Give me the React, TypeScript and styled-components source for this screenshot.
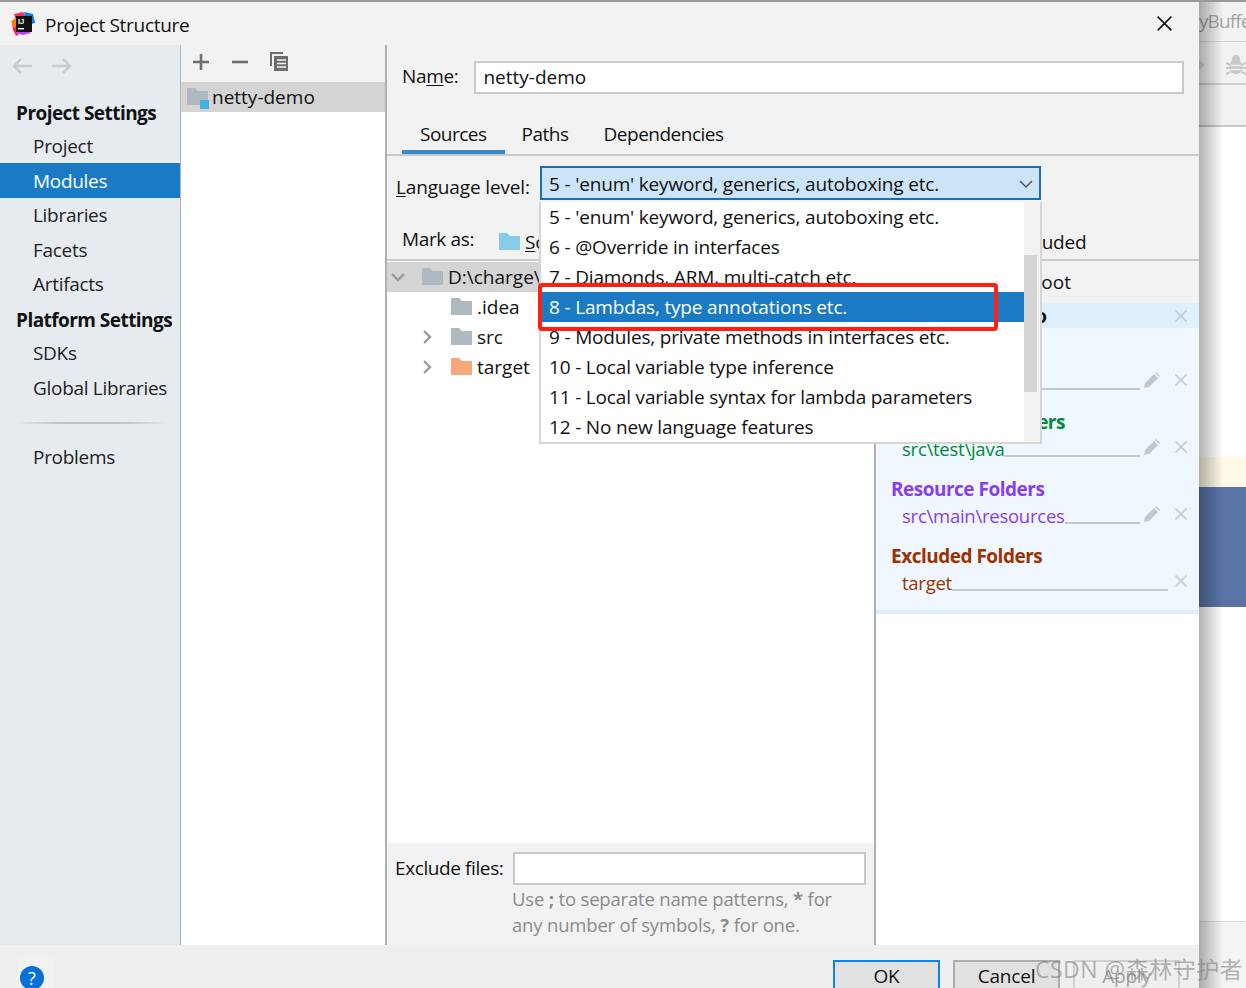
import React from "react";
import styled, { createGlobalStyle } from "styled-components";

const Global = createGlobalStyle`
  * { box-sizing: border-box; }
  html, body { margin: 0; padding: 0; background: #fff; }
  body { font-family: "Open Sans", "Noto Sans CJK SC", sans-serif; font-size: 19px; color: #111; }
  u { text-underline-offset: 2px; }
`;

const Screen = styled.div`
  position: relative; width: 1246px; height: 988px; overflow: hidden; display: flex;
  border-top: 2px solid #9a9a9a;
`;
const Dialog = styled.div`
  width: 1199px; height: 986px; flex: none; display: flex; flex-direction: column; background: #f2f2f2;
`;
const TitleBar = styled.div`
  height: 43px; flex: none; display: flex; align-items: center; padding: 0 27px 0 11px; gap: 9px;
`;
const Title = styled.span`flex: 1; font-size: 19px; letter-spacing: -0.3px; position: relative; top: 1px;`;
const Body = styled.div`flex: 1; display: flex; min-height: 0;`;
const Sidebar = styled.nav`
  width: 181px; flex: none; background: #e6ebf0; border-right: 1px solid #b4b4b4; display: flex; flex-direction: column;
`;
const NavArrows = styled.div`height: 41px; display: flex; align-items: center; gap: 18px; padding: 0 0 0 12px; margin-bottom: 8px;`;
const NavHeader = styled.div`height: 34.5px; display: flex; align-items: center; padding: 3px 0 0 16px; font-weight: 700; font-size: 19px; letter-spacing: -0.55px;`;
const NavItem = styled.div<{ $active?: boolean }>`
  height: 34.5px; display: flex; align-items: center; padding: 1px 0 0 33px; font-size: 19px; letter-spacing: -0.3px;
  background: ${p => (p.$active ? "#1a7bc4" : "transparent")};
  color: ${p => (p.$active ? "#fff" : "#222")};
`;
const NavRule = styled.div`height: 2px; margin: 17px 8px 16px 12px; background: linear-gradient(to right, #e6ebf0, #bfc3c7 30%, #bfc3c7 70%, #e6ebf0);`;

const Modules = styled.section`width: 206px; flex: none; background: #fff; border-right: 2px solid #b0b0b0; display: flex; flex-direction: column;`;
const ModuleBar = styled.div`height: 37px; background: #f2f2f2; display: flex; align-items: center; gap: 21px; padding: 0 0 3px 11px;`;
const ModuleRow = styled.div`height: 30px; background: #d4d4d4; display: flex; align-items: center; padding-left: 5px; gap: 1px; font-size: 19px;`;

const Main = styled.section`flex: 1; min-width: 0; display: flex; flex-direction: column;`;
const NameRow = styled.div`height: 64px; flex: none; display: flex; align-items: flex-start; padding: 16px 15px 0 15px; gap: 16px;`;
const NameLabel = styled.label`line-height: 30px; letter-spacing: -0.35px;`;
const TextInput = styled.div`
  flex: 1; height: 33px; background: #fff; border: 2px solid #c9c9c9; display: flex; align-items: center; padding: 0 0 2px 7px; color: #111;
`;
const Tabs = styled.div`height: 47px; flex: none; display: flex; border-bottom: 2px solid #c9c9c9; padding-left: 15px;`;
const Tab = styled.div<{ $active?: boolean }>`
  height: 45px; padding: 9px 18px 0; display: flex; align-items: center; margin-right: -1px; letter-spacing: -0.5px;
  border-bottom: 4px solid ${p => (p.$active ? "#3d88c8" : "transparent")};
`;
const LangRow = styled.div`height: 70px; flex: none; display: flex; align-items: flex-start; padding: 10px 0 0 9px;`;
const LangLabel = styled.label`width: 144px; line-height: 34px; position: relative; top: 4px; letter-spacing: -0.15px;`;
const Combo = styled.div`
  width: 501px; height: 34px; background: #cce4f8; border: 2px solid #1a6fb0; display: flex; align-items: center; justify-content: space-between; padding: 1px 6px 0 7px; letter-spacing: -0.17px;
`;
const MarkRow = styled.div`height: 35px; flex: none; display: flex; align-items: center; border-bottom: 2px solid #c9c9c9; padding: 0 0 2px 15px; white-space: nowrap;`;
const MarkLabel = styled.span`width: 97px; position: relative; top: -3px; letter-spacing: -0.35px;`;
const MarkOption = styled.span<{ $gap?: number }>`display: flex; align-items: center; gap: 5px; letter-spacing: -0.2px; margin-right: ${p => p.$gap ?? 16}px;`;
const Split = styled.div`flex: 1; display: flex; min-height: 0;`;
const LeftPane = styled.div`width: 489px; flex: none; background: #fff; display: flex; flex-direction: column; border-right: 2px solid #b0b0b0;`;
const Tree = styled.div`flex: 1; padding-top: 1px;`;
const TreeRow = styled.div<{ $selected?: boolean; $level: number }>`
  height: 30px; display: flex; align-items: center; white-space: nowrap; overflow: hidden; gap: 5px;
  padding-left: ${p => (p.$level === 0 ? 2 : 31)}px;
  background: ${p => (p.$selected ? "#d4d4d4" : "transparent")};
`;
const Twist = styled.span`width: 18px; height: 18px; flex: none; margin-right: 10px; display: flex; align-items: center; justify-content: center;`;
const Exclude = styled.div`height: 102px; flex: none; background: #f2f2f2; padding: 9px 8px 0 8px;`;
const ExcludeTop = styled.div`display: flex; align-items: center; justify-content: space-between; white-space: nowrap;`;
const ExcludeLabel = styled.label`letter-spacing: -0.4px; margin-bottom: 2px;`;
const ExcludeInput = styled.div`width: 353px; height: 33px; background: #fff; border: 2px solid #c9c9c9; flex: none;`;
const Hint = styled.p`margin: 1px 0 0 117px; line-height: 26px; color: #8b8b8b; font-size: 18.5px; letter-spacing: -0.18px; white-space: nowrap;`;

const Roots = styled.aside`flex: 1; min-width: 0; background: #fff; display: flex; flex-direction: column;`;
const AddRoot = styled.div`height: 42px; flex: none; background: #f2f2f2; display: flex; align-items: center; justify-content: flex-end; padding-right: 128px;`;
const RootCard = styled.div`background: #f0f7fe; border-bottom: 4px solid #dff0fd; height: 311px; flex: none;`;
const RootHead = styled.div`height: 25px; background: #dfeffc; display: flex; align-items: center; justify-content: flex-end; font-weight: 700; padding-right: 12px; margin-bottom: 14px; white-space: nowrap; overflow: hidden;`;
const RootPath = styled.span`margin-right: 128px; flex: none;`;
const FolderGroup = styled.div`padding-left: 15px; margin-bottom: 13px;`;
const GroupTitle = styled.div<{ $color: string }>`height: 27px; line-height: 27px; font-weight: 700; font-size: 19px; letter-spacing: -0.5px; color: ${p => p.$color};`;
const PathRow = styled.div<{ $color: string }>`height: 27px; display: flex; align-items: center; padding: 0 12px 3px 11px; color: ${p => p.$color}; font-size: 18.5px; letter-spacing: -0.25px;`;
const Leader = styled.span`flex: 1; align-self: flex-end; height: 2px; background: #c6c9cc; margin-bottom: 3px;`;
const RowIcons = styled.span<{ $edit: boolean }>`display: flex; align-items: center; gap: 15px; margin: 0 0 3px ${p => (p.$edit ? 4 : 7)}px;`;

const Footer = styled.footer`
  height: 43px; flex: none; background: #efefef; display: flex; justify-content: flex-end; align-items: flex-start; padding: 15px 19px 0 20px; gap: 13px;
`;
const HelpBox = styled.div`margin: -3px auto 0 -2px; height: 31px; padding: 9px 10px 0 2px; background: #f2f2f2;`;
const Help = styled.span`
  width: 24px; height: 24px; border-radius: 50%; background: #0b6fd8; color: #fff; font-size: 18px; display: flex; align-items: center; justify-content: center;
`;
const Btn = styled.button<{ $primary?: boolean; $disabled?: boolean }>`
  width: 107px; height: 40px; padding: 0 0 8px; font: inherit; font-size: 19px; letter-spacing: -0.2px; color: ${p => (p.$disabled ? "#a0a0a0" : "#111")};
  border: 2px solid ${p => (p.$primary ? "#0a84e6" : p.$disabled ? "#d0d0d0" : "#adadad")};
  background: ${p => (p.$disabled ? "#efefef" : "#e1e1e1")};
`;

const Backdrop = styled.div`
  flex: 1; display: flex; flex-direction: column; position: relative; background: #fff; overflow: hidden;
`;
const BackTitle = styled.div`height: 40px; border-bottom: 1px solid #d6d6d6; background: #f2f2f2; color: #a5a5a5; white-space: nowrap; padding: 6px 0 0 0; font-size: 19px; letter-spacing: -0.9px;`;
const BackTools = styled.div`height: 43px; background: #f2f2f2; border-bottom: 2px solid #d0d0d0; display: flex; align-items: center; gap: 21px; padding: 5px 0 0 0;`;
const BackTabs = styled.div`height: 42px; background: #f2f2f2; border-bottom: 2px solid #c8c8c8;`;
const BackSpacer = styled.div<{ $h: number }>`height: ${p => p.$h}px; flex: none;`;
const BackCream = styled.div`height: 30px; background: #fff9e6; flex: none;`;
const BackBlue = styled.div`height: 120px; background: #5a74a8; flex: none;`;
const BackBottom = styled.div`flex: 1; background: #f4f4f4; border-top: 1px solid #dcdcdc;`;
const Shadow = styled.div`position: absolute; left: 0; top: 0; bottom: 0; width: 24px; background: linear-gradient(to right, rgba(0,0,0,.3), rgba(0,0,0,0));`;

const Popup = styled.div`
  position: absolute; left: 539px; top: 200px; width: 503px; height: 242px; background: #fff; border: 2px solid #d6d6d6; border-top: 0; display: flex; letter-spacing: -0.17px;
`;
const PopupList = styled.div`flex: 1; min-width: 0;`;
const PopupItem = styled.div<{ $active?: boolean }>`
  height: 30px; display: flex; align-items: center; padding: 0 0 1px 8px; white-space: nowrap;
  background: ${p => (p.$active ? "#1a7bc4" : "#fff")}; color: ${p => (p.$active ? "#fff" : "#111")};
`;
const ScrollTrack = styled.div`width: 16px; flex: none; background: #f2f2f2; padding: 53px 3px 0 0;`;
const ScrollThumb = styled.div`height: 137px; background: #d6d6d6;`;
const RedBox = styled.div`position: absolute; left: 538px; top: 281px; width: 460px; height: 48px; border: 4px solid #fe2012; border-radius: 4px;`;
const Watermark = styled.div`position: absolute; left: 1035px; top: 949px; font-size: 23px; color: rgba(120,120,120,.55); white-space: nowrap; letter-spacing: .5px;`;

const Folder = ({ color = "#aeb9c0", size = 21 }: { color?: string; size?: number }) => (
  <svg width={size} height={size * 0.82} viewBox="0 0 21 17" style={{ flex: "none" }}>
    <path d="M0 0h8l3 3h10v14H0z" fill={color} />
  </svg>
);
const ModuleFolder = () => (
  <svg width="25" height="24" viewBox="0 0 25 24" style={{ flex: "none" }}>
    <path d="M1 3h8l3 3h10v14H1z" fill="#aeb9c0" />
    <rect x="14" y="15" width="9" height="9" fill="#3fb3e0" />
  </svg>
);
const Chevron = ({ dir, color = "#9a9a9a" }: { dir: "down" | "right"; color?: string }) => (
  <svg width="16" height="16" viewBox="0 0 16 16">
    <path d={dir === "down" ? "M2 5l6 6 6-6" : "M5 2l6 6-6 6"} fill="none" stroke={color} strokeWidth="2.4" />
  </svg>
);
const Cross = ({ size = 12, color = "#c5ccd2", w = 1.6 }: { size?: number; color?: string; w?: number }) => (
  <svg width={size} height={size} viewBox="0 0 12 12" style={{ flex: "none" }}>
    <path d="M.5.5l11 11M11.5.5l-11 11" stroke={color} strokeWidth={w} fill="none" />
  </svg>
);
const Pencil = () => (
  <svg width="16" height="16" viewBox="0 0 16 16" style={{ flex: "none" }}>
    <path d="M0 16l1-5L10 2l4 4-9 9zM11 1l1-1 4 4-1 1z" fill="#c3c8cc" />
  </svg>
);
const Arrow = ({ dir }: { dir: "l" | "r" }) => (
  <svg width="21" height="16" viewBox="0 0 21 16">
    <path d={dir === "l" ? "M20 8H2M9 1L2 8l7 7" : "M1 8h18M12 1l7 7-7 7"} fill="none" stroke="#c8cbce" strokeWidth="2.4" />
  </svg>
);
const Logo = () => (
  <svg width="25" height="26" viewBox="0 0 25 26" style={{ flex: "none" }}>
    <path d="M3 3l9-2 3 5-9 8z" fill="#fe315d" />
    <path d="M13 1l9 2 2 9-8 2z" fill="#087cfa" />
    <path d="M1 11l8-2 3 12-7 4-3-6z" fill="#fe2857" />
    <path d="M0 10l5-3 3 6-5 4z" fill="#ff8100" />
    <path d="M4 22l8 2 8-2-8-6z" fill="#b74af7" />
    <rect x="5" y="5" width="16" height="16" fill="#111" />
    <rect x="7" y="17" width="6" height="1.4" fill="#fff" />
    <text x="7" y="13" fontSize="7.5" fontWeight="700" fill="#fff" fontFamily="Liberation Sans, sans-serif">IJ</text>
  </svg>
);
const Minus = () => (
  <svg width="18" height="18" viewBox="0 0 18 18"><path d="M1 9h16" stroke="#6e6e6e" strokeWidth="2.6" /></svg>
);
const Plus = () => (
  <svg width="18" height="18" viewBox="0 0 18 18"><path d="M1 9h16M9 1v16" stroke="#6e6e6e" strokeWidth="2.6" /></svg>
);
const Copy = () => (
  <svg width="19" height="20" viewBox="0 0 19 20">
    <path d="M1 14V1h12" fill="none" stroke="#6e6e6e" strokeWidth="2" />
    <rect x="4" y="4" width="14" height="15" fill="#6e6e6e" />
    <path d="M7 8h9M7 11.5h9M7 15h9" stroke="#f2f2f2" strokeWidth="1.4" />
  </svg>
);
const RunMark = () => (
  <svg width="6" height="12" viewBox="0 0 6 12" style={{ flex: "none" }}><path d="M0 1l6 5-6 5z" fill="#d6d6d6" /></svg>
);
const Bug = () => (
  <svg width="20" height="22" viewBox="0 0 20 22" style={{ flex: "none" }}>
    <circle cx="10" cy="5" r="4" fill="#c9c9c9" />
    <rect x="4" y="6" width="12" height="14" rx="5" fill="#c9c9c9" />
    <path d="M0 9l4 2M20 9l-4 2M0 14h4M20 14h-4M0 20l4-2M20 20l-4-2" stroke="#c9c9c9" strokeWidth="2" />
    <path d="M5 11.5h10M5 15.5h10" stroke="#f2f2f2" strokeWidth="1.6" />
  </svg>
);

const levels = [
  "5 - 'enum' keyword, generics, autoboxing etc.",
  "6 - @Override in interfaces",
  "7 - Diamonds, ARM, multi-catch etc.",
  "8 - Lambdas, type annotations etc.",
  "9 - Modules, private methods in interfaces etc.",
  "10 - Local variable type inference",
  "11 - Local variable syntax for lambda parameters",
  "12 - No new language features",
];

const groups = [
  { title: "Source Folders", color: "#0b3fbf", path: "src\\main\\java", edit: true },
  { title: "Test Source Folders", color: "#008a3c", path: "src\\test\\java", edit: true },
  { title: "Resource Folders", color: "#8a3df0", path: "src\\main\\resources", edit: true },
  { title: "Excluded Folders", color: "#9a3300", path: "target", edit: false },
];

export default function App() {
  return (
    <Screen>
      <Global />
      <Dialog>
        <TitleBar>
          <Logo />
          <Title>Project Structure</Title>
          <Cross size={15} color="#111" w={1.2} />
        </TitleBar>
        <Body>
          <Sidebar>
            <NavArrows><Arrow dir="l" /><Arrow dir="r" /></NavArrows>
            <NavHeader>Project Settings</NavHeader>
            <NavItem>Project</NavItem>
            <NavItem $active>Modules</NavItem>
            <NavItem>Libraries</NavItem>
            <NavItem>Facets</NavItem>
            <NavItem>Artifacts</NavItem>
            <NavHeader>Platform Settings</NavHeader>
            <NavItem>SDKs</NavItem>
            <NavItem>Global Libraries</NavItem>
            <NavRule />
            <NavItem>Problems</NavItem>
          </Sidebar>
          <Modules>
            <ModuleBar><Plus /><Minus /><Copy /></ModuleBar>
            <ModuleRow><ModuleFolder />netty-demo</ModuleRow>
          </Modules>
          <Main>
            <NameRow>
              <NameLabel>Na<u>m</u>e:</NameLabel>
              <TextInput>netty-demo</TextInput>
            </NameRow>
            <Tabs>
              <Tab $active>Sources</Tab>
              <Tab>Paths</Tab>
              <Tab>Dependencies</Tab>
            </Tabs>
            <LangRow>
              <LangLabel><u>L</u>anguage level:</LangLabel>
              <Combo>
                <span>{levels[0]}</span>
                <svg width="14" height="14" viewBox="0 0 14 14"><path d="M1 4l6 6 6-6" fill="none" stroke="#555" strokeWidth="1.5" /></svg>
              </Combo>
            </LangRow>
            <MarkRow>
              <MarkLabel>Mark as:</MarkLabel>
              <MarkOption $gap={67}><Folder color="#85cbea" /><span><u>S</u>ources</span></MarkOption>
              <MarkOption $gap={67}><Folder color="#6cc08b" />Tests</MarkOption>
              <MarkOption $gap={68}><Folder color="#b99cf0" />Resources</MarkOption>
              <MarkOption><Folder color="#f6a77c" />Excluded</MarkOption>
            </MarkRow>
            <Split>
              <LeftPane>
                <Tree>
                  <TreeRow $selected $level={0}>
                    <Twist><Chevron dir="down" /></Twist>
                    <Folder />D:\charge\netty-demo
                  </TreeRow>
                  <TreeRow $level={1}>
                    <Twist />
                    <Folder />.idea
                  </TreeRow>
                  <TreeRow $level={1}>
                    <Twist><Chevron dir="right" /></Twist>
                    <Folder />src
                  </TreeRow>
                  <TreeRow $level={1}>
                    <Twist><Chevron dir="right" /></Twist>
                    <Folder color="#f6a77c" />target
                  </TreeRow>
                </Tree>
                <Exclude>
                  <ExcludeTop><ExcludeLabel>Exclude files:</ExcludeLabel><ExcludeInput /></ExcludeTop>
                  <Hint>Use <b>;</b> to separate name patterns, <b>*</b> for<br />any number of symbols, <b>?</b> for one.</Hint>
                </Exclude>
              </LeftPane>
              <Roots>
                <AddRoot>+ Add Content Root</AddRoot>
                <RootCard>
                  <RootHead>
                    <RootPath>D:\charge\netty-demo</RootPath>
                    <Cross />
                  </RootHead>
                  {groups.map(g => (
                    <FolderGroup key={g.title}>
                      <GroupTitle $color={g.color}>{g.title}</GroupTitle>
                      <PathRow $color={g.color}>
                        {g.path}
                        <Leader />
                        <RowIcons $edit={g.edit}>
                          {g.edit && <Pencil />}
                          <Cross />
                        </RowIcons>
                      </PathRow>
                    </FolderGroup>
                  ))}
                </RootCard>
              </Roots>
            </Split>
          </Main>
        </Body>
        <Footer>
          <HelpBox><Help>?</Help></HelpBox>
          <Btn $primary>OK</Btn>
          <Btn>Cancel</Btn>
          <Btn $disabled>Apply</Btn>
        </Footer>
      </Dialog>
      <Backdrop>
        <BackTitle>yBuffer</BackTitle>
        <BackTools><RunMark /><Bug /></BackTools>
        <BackTabs />
        <BackSpacer $h={330} />
        <BackCream />
        <BackBlue />
        <BackSpacer $h={314} />
        <BackBottom />
        <Shadow />
      </Backdrop>
      <Popup>
        <PopupList>
          {levels.map((l, i) => (
            <PopupItem key={l} $active={i === 3}>{l}</PopupItem>
          ))}
        </PopupList>
        <ScrollTrack><ScrollThumb /></ScrollTrack>
      </Popup>
      <RedBox />
      <Watermark>CSDN @森林守护者</Watermark>
    </Screen>
  );
}
